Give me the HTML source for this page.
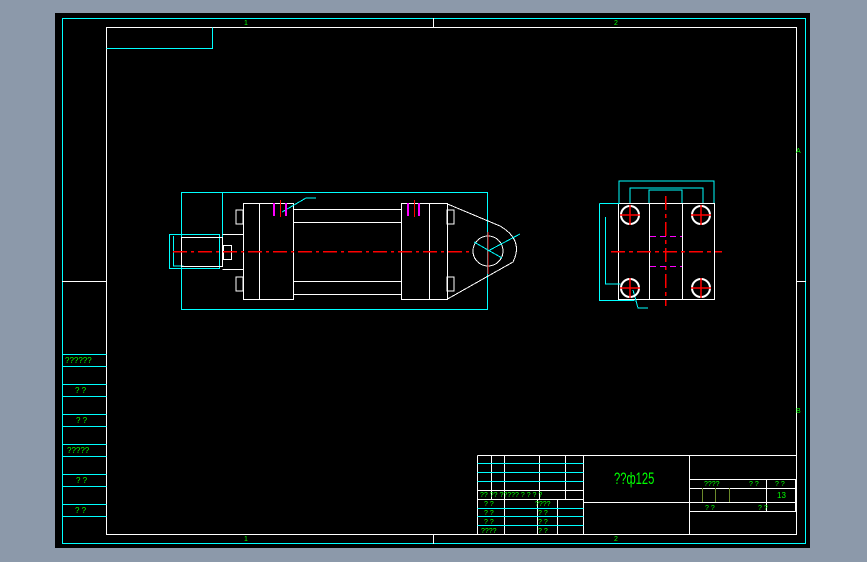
<!DOCTYPE html>
<html><head><style>html,body{margin:0;padding:0;background:#8c99aa;width:867px;height:562px;overflow:hidden}svg{display:block}text{font-family:"Liberation Sans",sans-serif;fill:#00ff00}</style></head><body>
<svg width="867" height="562" viewBox="0 0 867 562" xmlns="http://www.w3.org/2000/svg">
<rect x="0" y="0" width="867" height="562" fill="#8c99aa"/>
<rect x="55" y="13" width="755" height="535" fill="#000"/>
<g fill="none" stroke-width="1" shape-rendering="crispEdges">
<rect x="62.5" y="18.5" width="743" height="525" stroke="#00ffff"/>
<rect x="106.5" y="27.5" width="690" height="507" stroke="#fff"/>
<path d="M106.5 48.5H212.5V27.5" stroke="#00ffff"/>
<path d="M433.5 18v10M433.5 534v10M62 281.5h44M796 281.5h10" stroke="#fff"/>
<path d="M62.5 354.5h44M62.5 366.5h44M62.5 384.5h44M62.5 396.5h44M62.5 414.5h44M62.5 426.5h44M62.5 444.5h44M62.5 456.5h44M62.5 474.5h44M62.5 486.5h44M62.5 504.5h44M62.5 516.5h44" stroke="#00ffff"/>
<path d="M477.5 455.5h319M477.5 455.5v79M583.5 455.5v79M689.5 455.5v79M583.5 502.5h106M689.5 479.5h107M689.5 488.5h107M689.5 502.5h107M689.5 511.5h107M766.5 479.5v32M795.5 479.5v32M477.5 490.5h106M477.5 499.5h106M491.5 455.5v44M504.5 455.5v44M539.5 455.5v44M565.5 455.5v44M504.5 499.5v35M537.5 499.5v35M557.5 499.5v35" stroke="#fff"/>
<path d="M477.5 463.5h106M477.5 472.5h106M477.5 481.5h106M477.5 508.5h106M477.5 516.5h106M477.5 525.5h106" stroke="#00ffff"/>
<path d="M702.5 488v14M715.5 488v14M729.5 488v14" stroke="#6b8a2a"/>
<rect x="181.5" y="192.5" width="306" height="117" stroke="#00ffff"/>
<path d="M222.5 192v54M169.5 234.5h50v34h-50zM173.5 236v30h10" stroke="#00ffff"/>
<rect x="181.5" y="237.5" width="41" height="29" stroke="#fff"/>
<path d="M222.5 234.5h21M222.5 269.5h21" stroke="#fff"/>
<rect x="223.5" y="245.5" width="8" height="14" stroke="#fff"/>
<rect x="243.5" y="203.5" width="50" height="96" stroke="#fff"/>
<path d="M259.5 203v96" stroke="#fff"/>
<rect x="401.5" y="203.5" width="46" height="96" stroke="#fff"/>
<path d="M429.5 203v96M293 209.5h108M293 222.5h108M293 281.5h108M293 294.5h108" stroke="#fff"/>
<path d="M447.5 204L500 226Q524 240 513 262L447.5 299" stroke="#fff"/>
<circle cx="488" cy="251" r="15" stroke="#fff"/>
<path d="M236 210h7v14h-7zM236 277h7v14h-7zM447 210h7v14h-7zM447 277h7v14h-7z" stroke="#fff"/>
<path d="M173 251.5h300" stroke="#ff0000" stroke-width="1.5" stroke-dasharray="14 4 3 4"/>
<path d="M488 232v42" stroke="#ff0000"/>
<path d="M474 242l28 16M488 251l32-17M282 212l24-14h10" stroke="#00ffff"/>
<path d="M274 203v13M286 203v13M408 203v13M419 203v13" stroke="#ff00ff" stroke-width="2"/>
<path d="M280.5 200v17M414.5 200v17" stroke="#ff0000"/>
<rect x="618.5" y="203.5" width="96" height="96" stroke="#fff"/>
<path d="M649.5 203v96M682.5 203v96" stroke="#fff"/>
<path d="M619 203V181h95v22M630 203v-15h73v15M649 203v-13h33v13M599.5 203.5h20M599.5 203.5v97h35M605.5 217v67h15M633 290l5 18h10" stroke="#00ffff"/>
<path d="M665.5 196v110M611 251.5h111" stroke="#ff0000" stroke-width="1.5" stroke-dasharray="14 4 4 4"/>
<path d="M650 236.5h32M650 266.5h32" stroke="#ff00ff" stroke-dasharray="6 4"/>
</g>
<g fill="none" stroke="#fff" stroke-width="2">
<circle cx="630" cy="215" r="9"/><circle cx="701" cy="215" r="9"/>
<circle cx="630" cy="288" r="9"/><circle cx="701" cy="288" r="9"/>
</g>
<g stroke="#ff0000" stroke-width="1.5">
<path d="M620 215h20M630 205v20M691 215h20M701 205v20M620 288h20M630 278v20M691 288h20M701 278v20"/>
</g>
<g font-size="8">
<text x="65" y="363">??????</text><text x="75" y="393">? ?</text><text x="76" y="423">? ?</text>
<text x="67" y="453">?????</text><text x="76" y="483">? ?</text><text x="75" y="513">? ?</text>
<text x="480" y="497" font-size="7">?? ?? ????? ? ? ? ?</text>
<text x="484" y="506" font-size="7">? ?</text><text x="535" y="506" font-size="7">????</text>
<text x="484" y="515" font-size="7">? ?</text><text x="538" y="515" font-size="7">? ?</text>
<text x="484" y="524" font-size="7">? ?</text><text x="538" y="524" font-size="7">? ?</text>
<text x="481" y="533" font-size="7">????</text><text x="538" y="533" font-size="7">? ?</text>
<text x="704" y="486" font-size="7">????</text><text x="749" y="486" font-size="7">? ?</text><text x="775" y="486" font-size="7">? ?</text>
<text x="777" y="498" font-size="8">13</text>
<text x="705" y="510" font-size="7">? ?</text><text x="758" y="510" font-size="7">? ?</text>
<text x="614" y="484" font-size="14" transform="translate(614 484) scale(0.8 1.2) translate(-614 -484)">??ф125</text>
<text x="244" y="25" font-size="7">1</text><text x="614" y="25" font-size="7">2</text>
<text x="244" y="541" font-size="7">1</text><text x="614" y="541" font-size="7">2</text>
<text x="796" y="153" font-size="7">A</text><text x="796" y="413" font-size="7">B</text>
</g>
</svg>
</body></html>
